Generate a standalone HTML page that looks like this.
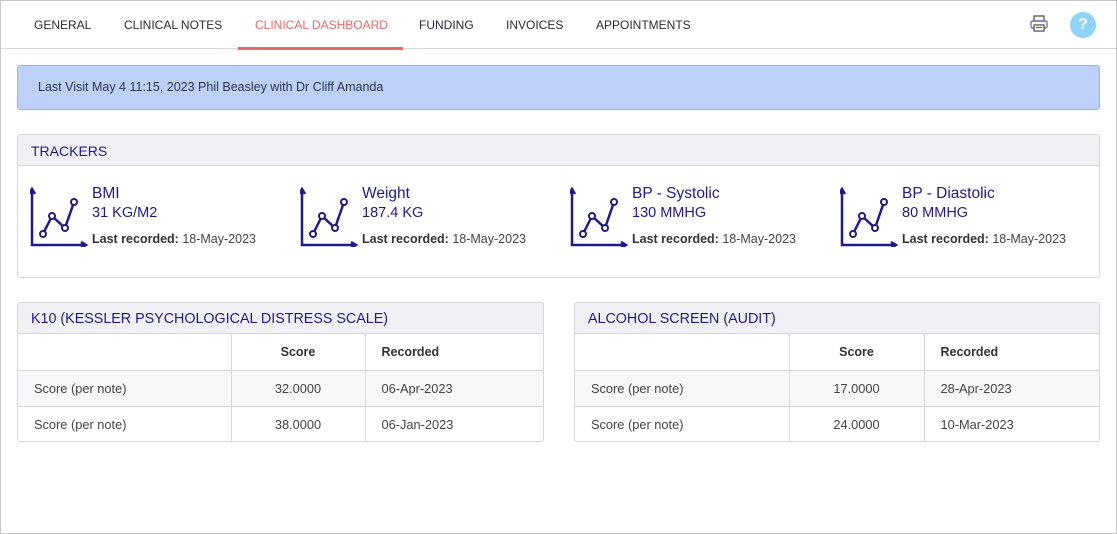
<!DOCTYPE html>
<html><head><style>
*{box-sizing:border-box;margin:0;padding:0}
body{width:1117px;height:534px;font-family:"Liberation Sans",sans-serif;background:#fff;position:relative;overflow:hidden}
.frame{position:absolute;left:0;top:0;width:1117px;height:534px;border:1px solid #c8c8c8}
.nav{position:absolute;left:1px;top:1px;width:1115px;height:48px;border-bottom:1px solid #d4d8de}
.tab{position:absolute;top:17px;font-size:12px;color:#2a2a3a}
.act{color:#e86a66}
.ul{position:absolute;left:237px;top:46px;width:165px;height:3px;background:#e86a66}
.alert{position:absolute;left:17px;top:65px;width:1083px;height:45px;background:#bdd0f7;border:1px solid #9eb4dd;border-radius:3px;font-size:12.5px;color:#2c3550;padding:14px 0 0 20px}
.panel{position:absolute;border:1px solid #d6d6dc;border-radius:3px;background:#fff;overflow:hidden}
.ph{height:31px;background:#f1f1f5;border-bottom:1px solid #d6d6dc;color:#1e1a8a;font-size:14px;padding:8px 0 0 13px}
.tr{position:absolute;top:50px}
.tr svg{position:absolute;left:0;top:0}
.tr .t{position:absolute;left:62px;top:0px;font-size:15.5px;color:#1e1a8a;white-space:nowrap}
.tr .v{position:absolute;left:62px;top:20px;font-size:14.5px;color:#1e1a8a;white-space:nowrap}
.tr .l{position:absolute;left:62px;top:47px;font-size:12.5px;color:#444;white-space:nowrap}
.tr .l b{color:#333}
table{border-collapse:collapse;width:100%;font-size:12.8px;color:#444}
td{border-right:1px solid #d6d6dc;border-bottom:1px solid #d6d6dc;height:36px;padding:0 16px}
td:last-child{border-right:none}
tr:last-child td{border-bottom:none}
th{font-weight:bold;color:#333;border-right:1px solid #d6d6dc;border-bottom:1px solid #d6d6dc;height:36px;padding:0 16px;text-align:left;font-size:12.5px}
th:last-child{border-right:none}
.c{text-align:center}
tr.s td{background:#f7f7f9}
</style></head><body>
<div class="frame"></div>
<div class="nav">
<span class="tab" style="left:33px">GENERAL</span>
<span class="tab" style="left:123px">CLINICAL NOTES</span>
<span class="tab act" style="left:254px">CLINICAL DASHBOARD</span>
<span class="tab" style="left:418px">FUNDING</span>
<span class="tab" style="left:505px">INVOICES</span>
<span class="tab" style="left:595px">APPOINTMENTS</span>
<div class="ul"></div>
<svg style="position:absolute;left:1028px;top:13px" width="20" height="20" viewBox="0 0 20 20"><rect x="5" y="2" width="10" height="5" fill="none" stroke="#555" stroke-width="1.3"/><rect x="2" y="7" width="16" height="7" rx="1.5" fill="none" stroke="#7a6fc0" stroke-width="1.4"/><rect x="5" y="11" width="10" height="6" fill="#fff" stroke="#555" stroke-width="1.3"/><line x1="7" y1="13.5" x2="13" y2="13.5" stroke="#555"/></svg>
<div style="position:absolute;left:1069px;top:11px;width:26px;height:26px;border-radius:50%;background:#8dd4f8;color:#fff;font-weight:bold;font-size:16px;text-align:center;line-height:26px">?</div>
</div>
<div class="alert">Last Visit May 4 11:15, 2023 Phil Beasley with Dr Cliff Amanda</div>

<div class="panel" style="left:17px;top:134px;width:1083px;height:144px">
<div class="ph">TRACKERS</div>
<div class="tr" style="left:12px"><svg width="60" height="62"><g fill="none" stroke="#1e1a8a" stroke-width="2.5"><polyline points="2,5 2,60 55,60"/><polyline points="-1,9 2,4 5,9"/><polyline points="51,57 56,60 51,63"/><polyline points="13,49 22,31 35,43 44,17"/><circle cx="13" cy="49" r="3" fill="#fff" stroke-width="2"/><circle cx="22" cy="31" r="3" fill="#fff" stroke-width="2"/><circle cx="35" cy="43" r="3" fill="#fff" stroke-width="2"/><circle cx="44" cy="17" r="3" fill="#fff" stroke-width="2"/></g></svg><div class="t">BMI</div><div class="v">31 KG/M2</div><div class="l"><b>Last recorded:</b> 18-May-2023</div></div>
<div class="tr" style="left:282px"><svg width="60" height="62"><g fill="none" stroke="#1e1a8a" stroke-width="2.5"><polyline points="2,5 2,60 55,60"/><polyline points="-1,9 2,4 5,9"/><polyline points="51,57 56,60 51,63"/><polyline points="13,49 22,31 35,43 44,17"/><circle cx="13" cy="49" r="3" fill="#fff" stroke-width="2"/><circle cx="22" cy="31" r="3" fill="#fff" stroke-width="2"/><circle cx="35" cy="43" r="3" fill="#fff" stroke-width="2"/><circle cx="44" cy="17" r="3" fill="#fff" stroke-width="2"/></g></svg><div class="t">Weight</div><div class="v">187.4 KG</div><div class="l"><b>Last recorded:</b> 18-May-2023</div></div>
<div class="tr" style="left:552px"><svg width="60" height="62"><g fill="none" stroke="#1e1a8a" stroke-width="2.5"><polyline points="2,5 2,60 55,60"/><polyline points="-1,9 2,4 5,9"/><polyline points="51,57 56,60 51,63"/><polyline points="13,49 22,31 35,43 44,17"/><circle cx="13" cy="49" r="3" fill="#fff" stroke-width="2"/><circle cx="22" cy="31" r="3" fill="#fff" stroke-width="2"/><circle cx="35" cy="43" r="3" fill="#fff" stroke-width="2"/><circle cx="44" cy="17" r="3" fill="#fff" stroke-width="2"/></g></svg><div class="t">BP - Systolic</div><div class="v">130 MMHG</div><div class="l"><b>Last recorded:</b> 18-May-2023</div></div>
<div class="tr" style="left:822px"><svg width="60" height="62"><g fill="none" stroke="#1e1a8a" stroke-width="2.5"><polyline points="2,5 2,60 55,60"/><polyline points="-1,9 2,4 5,9"/><polyline points="51,57 56,60 51,63"/><polyline points="13,49 22,31 35,43 44,17"/><circle cx="13" cy="49" r="3" fill="#fff" stroke-width="2"/><circle cx="22" cy="31" r="3" fill="#fff" stroke-width="2"/><circle cx="35" cy="43" r="3" fill="#fff" stroke-width="2"/><circle cx="44" cy="17" r="3" fill="#fff" stroke-width="2"/></g></svg><div class="t">BP - Diastolic</div><div class="v">80 MMHG</div><div class="l"><b>Last recorded:</b> 18-May-2023</div></div>
</div>

<div class="panel" style="left:17px;top:302px;width:527px;height:140px">
<div class="ph" style="font-size:14.3px">K10 (KESSLER PSYCHOLOGICAL DISTRESS SCALE)</div>
<table><tr><th style="width:213px"></th><th class="c" style="width:134px;text-align:center">Score</th><th>Recorded</th></tr>
<tr class="s"><td>Score (per note)</td><td class="c">32.0000</td><td>06-Apr-2023</td></tr>
<tr><td>Score (per note)</td><td class="c">38.0000</td><td>06-Jan-2023</td></tr></table>
</div>
<div class="panel" style="left:574px;top:302px;width:526px;height:140px">
<div class="ph" style="font-size:14.3px">ALCOHOL SCREEN (AUDIT)</div>
<table><tr><th style="width:214px"></th><th class="c" style="width:135px;text-align:center">Score</th><th>Recorded</th></tr>
<tr class="s"><td>Score (per note)</td><td class="c">17.0000</td><td>28-Apr-2023</td></tr>
<tr><td>Score (per note)</td><td class="c">24.0000</td><td>10-Mar-2023</td></tr></table>
</div>
</body></html>
